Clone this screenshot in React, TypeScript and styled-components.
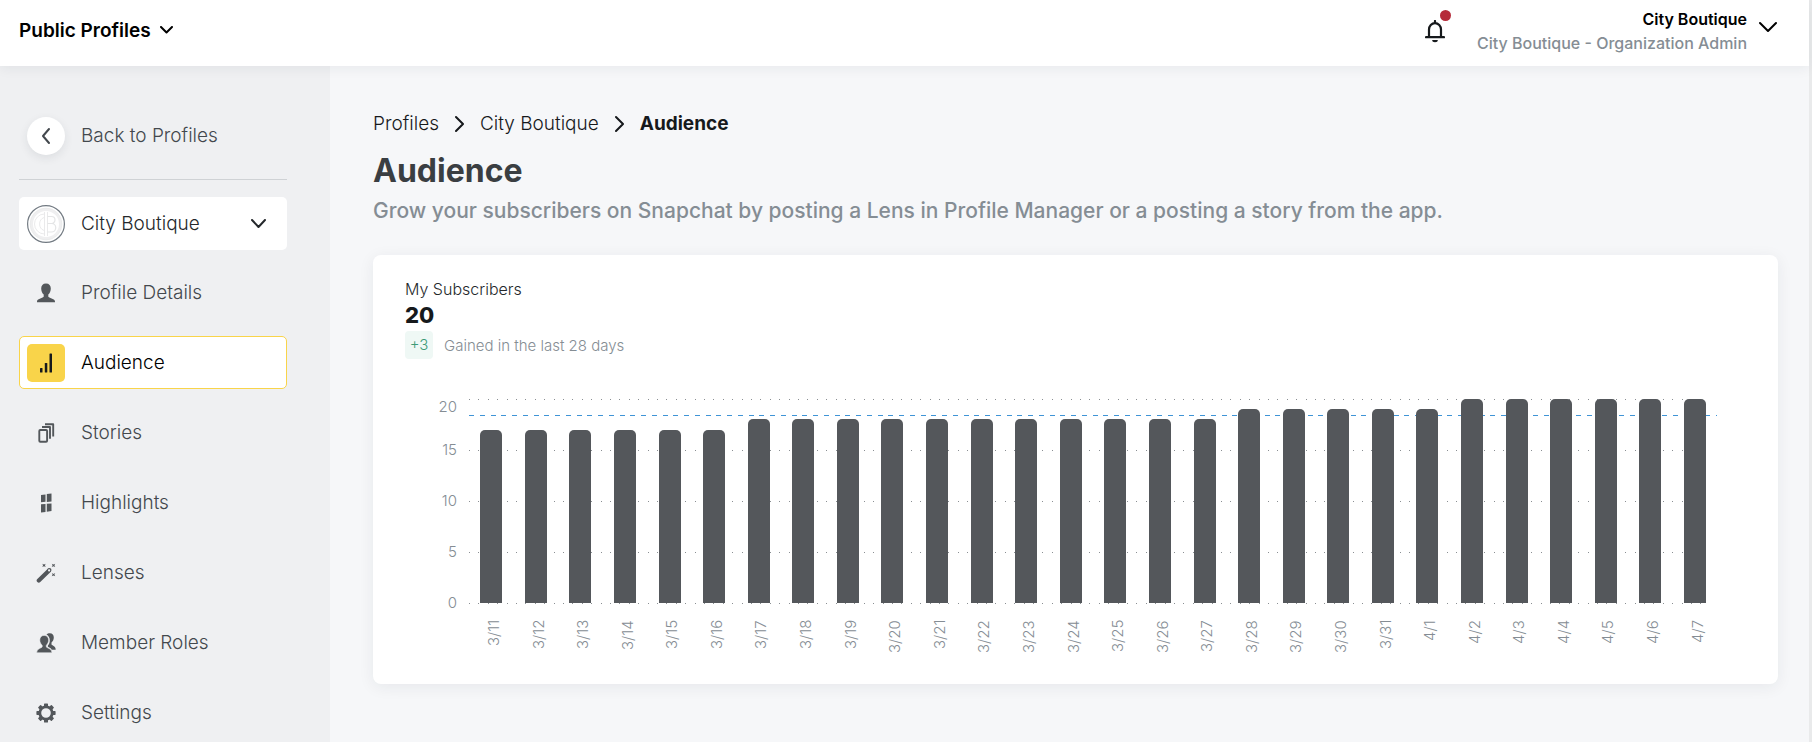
import React from "react";
import styled, { createGlobalStyle } from "styled-components";

const GlobalStyle = createGlobalStyle`
  *, *::before, *::after { box-sizing: border-box; }
  html { height: 100%; }
  body {
    margin: 0;
    min-height: 100%;
    background: #f6f7f9;
    color: #16191c;
    font-family: Inter, "Liberation Sans", sans-serif;
    -webkit-font-smoothing: antialiased;
  }
  button { font: inherit; color: inherit; background: none; border: 0; padding: 0; cursor: pointer; }
  a { color: inherit; text-decoration: none; }
  h1, h2, p, ul, ol { margin: 0; padding: 0; }
  ul, ol { list-style: none; }
  svg { display: block; flex: none; }
`;

const Page = styled.div`
  min-height: 100vh;
  display: flex;
  flex-direction: column;
  border-right: 3px solid #e9eaeb;
`;

const TopBar = styled.header`
  position: relative;
  z-index: 1;
  height: 66px;
  flex: none;
  padding: 0 32px 0 19px;
  display: flex;
  justify-content: space-between;
  background: #fff;
  box-shadow: 0 2px 12px rgba(30, 40, 50, 0.07);
`;

const AppSwitcher = styled.button`
  height: 60px;
  display: flex;
  align-items: center;
  gap: 9px;
  color: #000;
  font-size: 19px;
  font-weight: 600;
`;

const TopActions = styled.div`
  display: flex;
  align-items: flex-start;
  gap: 32px;
`;

const BellButton = styled.button`
  position: relative;
  margin-top: 20px;
`;

const UnreadDot = styled.span`
  position: absolute;
  top: -10px;
  right: -6px;
  width: 11px;
  height: 11px;
  border-radius: 50%;
  background: #b52a39;
`;

const AccountButton = styled.button`
  display: flex;
  align-items: flex-start;
  gap: 12px;
  margin-top: 7px;
  text-align: right;
  color: #000;
  font-size: 16px;
  line-height: 24px;
  svg { margin-top: 14px; }
`;

const AccountText = styled.span`
  display: flex;
  flex-direction: column;
  font-weight: 500;
`;

const AccountName = styled.span`
  font-weight: 600;
`;

const AccountRole = styled.span`
  color: #858d94;
`;

const Body = styled.div`
  flex: 1;
  display: flex;
`;

const Sidebar = styled.nav`
  flex: none;
  width: 330px;
  padding: 43px 43px 0 19px;
  background: #eff0f2;
`;

const navRow = `
  width: 100%;
  height: 53px;
  padding: 0 7px;
  display: flex;
  align-items: center;
  gap: 16px;
  border: 1px solid transparent;
  border-radius: 5px;
  font-size: 19px;
  font-weight: 300;
  text-align: left;
`;

const BackLink = styled.a`
  ${navRow}
  color: #43484d;
`;

const BackCircle = styled.span`
  width: 38px;
  height: 38px;
  display: flex;
  align-items: center;
  justify-content: center;
  border-radius: 50%;
  background: #fff;
  color: #43484d;
  box-shadow: 0 3px 10px rgba(30, 40, 50, 0.09);
`;

const Divider = styled.hr`
  height: 1px;
  margin: 17px 0;
  border: 0;
  background: #cfd2d5;
`;

const ProfilePicker = styled.button`
  && {
    ${navRow}
    padding-right: 20px;
    background: #fff;
    color: #24282b;
  }
`;

const PickerName = styled.span`
  flex: 1;
`;

const NavList = styled.ul`
  margin-top: 16px;
  display: flex;
  flex-direction: column;
  gap: 17px;
`;

const NavLink = styled.a<{ $active?: boolean }>`
  ${navRow}
  color: ${(p) => (p.$active ? "#000" : "#43484d")};
  ${(p) => p.$active && "background: #fff; border-color: #f9d44a;"}
`;

const NavIcon = styled.span<{ $active?: boolean }>`
  width: 38px;
  height: 38px;
  display: flex;
  align-items: center;
  justify-content: center;
  border-radius: 5px;
  color: ${(p) => (p.$active ? "#16191c" : "#53575b")};
  background: ${(p) => (p.$active ? "#f9d44a" : "transparent")};
`;

const Main = styled.main`
  flex: 1;
  min-width: 0;
  padding: 46px 31px 60px 43px;
`;

const Breadcrumbs = styled.ol`
  display: flex;
  align-items: center;
  font-size: 19px;
  line-height: 24px;
`;

const Crumb = styled.li<{ $current?: boolean }>`
  display: flex;
  align-items: center;
  font-weight: ${(p) => (p.$current ? 700 : 300)};
  svg { margin: 0 16px; }
`;

const Title = styled.h1`
  margin-top: 15px;
  color: #3a3e42;
  font-size: 32px;
  font-weight: 700;
  line-height: 40px;
`;

const Subtitle = styled.p`
  margin-top: 4px;
  color: #858d94;
  font-size: 21px;
  font-weight: 500;
  line-height: 32px;
`;

const Card = styled.section`
  margin-top: 28px;
  padding: 22px 61px 32px 32px;
  border-radius: 8px;
  background: #fff;
  box-shadow: 0 3px 16px rgba(30, 40, 50, 0.07);
`;

const MetricLabel = styled.h2`
  font-size: 16px;
  font-weight: 300;
  line-height: 24px;
  color: #24282b;
`;

const MetricValue = styled.p`
  font-size: 22px;
  font-weight: 800;
  line-height: 28px;
`;

const MetricDelta = styled.p`
  margin-top: 2px;
  display: flex;
  align-items: center;
  gap: 11px;
  color: #858d94;
  font-size: 15px;
  font-weight: 300;
`;

const DeltaBadge = styled.span`
  width: 28px;
  height: 28px;
  border-radius: 4px;
  background: #eff8f5;
  color: #3d9b77;
  line-height: 28px;
  text-align: center;
`;

const Chart = styled.div`
  margin-top: 40px;
  display: grid;
  grid-template-columns: 52px 1fr;
  column-gap: 12px;
  color: #858d94;
  font-size: 15px;
  font-weight: 300;
`;

const YAxis = styled.div`
  display: grid;
  grid-template-rows: 16px 43px repeat(3, 51px);
  align-items: end;
  margin-bottom: -8px;
  text-align: right;
  line-height: 16px;
`;

const Plot = styled.div`
  position: relative;
  height: 204px;
`;

const Lines = styled.svg`
  position: absolute;
  inset: 0;
  width: 100%;
  height: 100%;
  overflow: visible;
`;

const Bars = styled.div`
  position: relative;
  height: 100%;
  display: flex;
  align-items: flex-end;
`;

const BarSlot = styled.div`
  flex: 1;
  height: 100%;
  display: flex;
  align-items: flex-end;
  justify-content: center;
`;

const Bar = styled.div`
  width: 22px;
  border-radius: 5px 5px 0 0;
  background: #54575b;
`;

const XAxis = styled.div`
  grid-column: 2;
  height: 32px;
  margin: 17px -3px 0 3px;
  display: flex;
`;

const XLabel = styled.span`
  flex: 1;
  display: flex;
  align-items: center;
  justify-content: flex-end;
  writing-mode: vertical-rl;
  transform: rotate(180deg);
  line-height: 16px;
`;

const Chevron = ({ width, height, points, stroke = 2 }: { width: number; height: number; points: string; stroke?: number }) => (
  <svg width={width} height={height} viewBox={`0 0 ${width} ${height}`} fill="none" stroke="currentColor" strokeWidth={stroke} strokeLinecap="round" strokeLinejoin="round" aria-hidden="true">
    <polyline points={points} />
  </svg>
);

const BellIcon = () => (
  <svg width="20" height="23" viewBox="0 0 20 23" fill="none" stroke="currentColor" strokeWidth="2.2" aria-hidden="true">
    <path d="M4 17V9.5a6 6.3 0 0 1 12 0V17" />
    <path d="M1 17.2h18" strokeLinecap="round" />
    <path d="M10 1v2" strokeLinecap="round" />
    <path d="M7.2 20h5.6a2.8 2.2 0 0 1-5.6 0z" fill="currentColor" stroke="none" />
  </svg>
);

const Icon = ({ children }: { children: React.ReactNode }) => (
  <svg width="20" height="20" viewBox="0 0 20 20" fill="currentColor" aria-hidden="true">
    {children}
  </svg>
);

const PersonIcon = () => (
  <Icon>
    <path d="M10 .5c3.200 0 4.800 2 4.800 5 0 2.600-1 4.800-2.500 6v2.200c1.400 1.700 6.700 1.800 6.700 4.800v.8H1v-.8c0-3 5.300-3.100 6.700-4.800v-2.200C6.200 10.300 5.200 8.100 5.200 5.500c0-3 1.600-5 4.800-5z" />
  </Icon>
);

const ChartIcon = () => (
  <Icon>
    <rect x="4" y="15" width="2.500" height="4.500" rx=".6" />
    <rect x="8.800" y="10" width="2.500" height="9.500" rx=".6" />
    <rect x="13.500" y=".5" width="2.500" height="19" rx=".6" />
  </Icon>
);

const StoriesIcon = () => (
  <Icon>
    <g fill="none" stroke="currentColor" strokeWidth="1.900" strokeLinejoin="round">
      <rect x="3.300" y="7" width="7.800" height="11.800" rx="1" />
      <path d="M6 4h8V15.800" />
      <path d="M9 1.300h8.200v12.200" />
    </g>
  </Icon>
);

const HighlightsIcon = () => (
  <Icon>
    <path d="M5 2l4.500-.6v7.400L5 9.300zM10.800 1L15.500.4v8.200l-4.700.5zM5 11.300l4.500-.3v8L5 19.600zM10.800 10.800l4.700-.4v7.700l-4.700.6z" />
  </Icon>
);

const WandIcon = () => (
  <Icon>
    <path d="M2.800 17.500L12.800 7.700" fill="none" stroke="currentColor" strokeWidth="4.200" strokeLinecap="round" />
    <circle cx="13.400" cy="7.100" r="2.100" />
    <circle cx="13.100" cy="7.400" r="1.100" fill="#eff0f2" />
    <path d="M6.300.7l1.700.9 1.700-.9-.8 1.600.8 1.700-1.700-.8-1.700.8.8-1.700zM15.800.7l1.700.9 1.700-.9-.8 1.600.8 1.700-1.700-.8-1.700.8.8-1.700zM15.800 10l1.700.9 1.700-.9-.8 1.600.8 1.700-1.700-.8-1.700.8.8-1.700z" />
  </Icon>
);

const MembersIcon = () => (
  <Icon>
    <path d="M10.500 1.600C11.300.7 12.500.3 13.800.3c2.700 0 4 1.800 4 4.300 0 2.200-1 4-2.300 5v1.900c1 1.100 4.200 1.700 4.200 5.200h-3.900c-1-1.700-3.100-2.200-3.900-2.900v-1.300c1.200-1.200 1.900-3 1.900-5 0-2.600-1.200-4.800-3.300-5.900z" />
    <path d="M8.200 2.400c2.800 0 4.400 1.900 4.400 4.600 0 2.200-1 4.100-2.300 5.200v1.800c1.100 1.200 5.500 1.800 5.500 5.200v.5H.8v-.5c0-3.400 4.300-4 5.400-5.200v-1.800C4.800 11.100 3.800 9.200 3.800 7c0-2.700 1.600-4.600 4.400-4.600z" stroke="#eff0f2" strokeWidth=".5" />
  </Icon>
);

const GearIcon = () => (
  <Icon>
    <circle cx="10" cy="10" r="6.200" fill="none" stroke="currentColor" strokeWidth="2.800" />
    {[0, 45, 90, 135, 180, 225, 270, 315].map((angle) => (
      <rect key={angle} x="8" y=".4" width="4" height="3.600" rx=".7" transform={`rotate(${angle} 10 10)`} />
    ))}
  </Icon>
);

const BoutiqueLogo = () => (
  <svg width="38" height="38" viewBox="0 0 38 38" fill="none" aria-hidden="true">
    <circle cx="19" cy="19" r="18.400" fill="#fff" stroke="#737b83" strokeWidth="1.200" />
    <circle cx="19" cy="19" r="14.500" stroke="#efeff0" strokeWidth="3" />
    <circle cx="19" cy="19" r="16" stroke="#e6e7e8" strokeWidth=".6" />
    <path d="M17.500 9a10 10 0 0 0 0 20" stroke="#e4e5e6" strokeWidth=".8" />
    <path d="M17 12.500a7 7 0 0 0 0 13" stroke="#e4e5e6" strokeWidth=".8" />
    <path d="M17.500 7v24M20.500 7v24" stroke="#e4e5e6" strokeWidth=".8" />
    <path d="M20.500 11.500h4a3.500 3.500 0 0 1 0 7h-4M24.500 18.500a4 4 0 0 1 0 8.500h-4" stroke="#e4e5e6" strokeWidth="1.200" />
  </svg>
);

const navItems = [
  { label: "Profile Details", icon: <PersonIcon /> },
  { label: "Audience", icon: <ChartIcon />, active: true },
  { label: "Stories", icon: <StoriesIcon /> },
  { label: "Highlights", icon: <HighlightsIcon /> },
  { label: "Lenses", icon: <WandIcon /> },
  { label: "Member Roles", icon: <MembersIcon /> },
  { label: "Settings", icon: <GearIcon /> },
];

const MAX = 20;
const ticks = [20, 15, 10, 5, 0];
const subscribers: [string, number][] = [
  ["3/11", 17], ["3/12", 17], ["3/13", 17], ["3/14", 17], ["3/15", 17], ["3/16", 17],
  ["3/17", 18], ["3/18", 18], ["3/19", 18], ["3/20", 18], ["3/21", 18], ["3/22", 18],
  ["3/23", 18], ["3/24", 18], ["3/25", 18], ["3/26", 18], ["3/27", 18],
  ["3/28", 19], ["3/29", 19], ["3/30", 19], ["3/31", 19], ["4/1", 19],
  ["4/2", 20], ["4/3", 20], ["4/4", 20], ["4/5", 20], ["4/6", 20], ["4/7", 20],
];
const average = subscribers.reduce((sum, [, n]) => sum + n, 0) / subscribers.length;
const fromTop = (n: number) => `${100 - (n / MAX) * 100}%`;

export default function App() {
  return (
    <Page>
      <GlobalStyle />
      <TopBar>
        <AppSwitcher type="button">
          Public Profiles
          <Chevron width={13} height={8} points="1,1 6.5,6.5 12,1" />
        </AppSwitcher>
        <TopActions>
          <BellButton type="button" aria-label="Notifications">
            <BellIcon />
            <UnreadDot />
          </BellButton>
          <AccountButton type="button">
            <AccountText>
              <AccountName>City Boutique</AccountName>
              <AccountRole>City Boutique - Organization Admin</AccountRole>
            </AccountText>
            <Chevron width={18} height={12} points="1,2 9,10 17,2" />
          </AccountButton>
        </TopActions>
      </TopBar>
      <Body>
        <Sidebar aria-label="Profile">
          <BackLink href="#profiles">
            <BackCircle>
              <Chevron width={10} height={18} points="8,2 2,9 8,16" />
            </BackCircle>
            Back to Profiles
          </BackLink>
          <Divider />
          <ProfilePicker type="button">
            <BoutiqueLogo />
            <PickerName>City Boutique</PickerName>
            <Chevron width={15} height={9} points="1,1 7.5,8 14,1" />
          </ProfilePicker>
          <NavList>
            {navItems.map(({ label, icon, active }) => (
              <li key={label}>
                <NavLink href={`#${label.toLowerCase().replace(" ", "-")}`} $active={active} aria-current={active ? "page" : undefined}>
                  <NavIcon $active={active}>{icon}</NavIcon>
                  {label}
                </NavLink>
              </li>
            ))}
          </NavList>
        </Sidebar>
        <Main>
          <nav aria-label="Breadcrumb">
            <Breadcrumbs>
              <Crumb>
                <a href="#profiles">Profiles</a>
                <Chevron width={9} height={18} points="1,2 8,9 1,16" />
              </Crumb>
              <Crumb>
                <a href="#city-boutique">City Boutique</a>
                <Chevron width={9} height={18} points="1,2 8,9 1,16" />
              </Crumb>
              <Crumb $current aria-current="page">Audience</Crumb>
            </Breadcrumbs>
          </nav>
          <Title>Audience</Title>
          <Subtitle>Grow your subscribers on Snapchat by posting a Lens in Profile Manager or a posting a story from the app.</Subtitle>
          <Card>
            <MetricLabel>My Subscribers</MetricLabel>
            <MetricValue>20</MetricValue>
            <MetricDelta>
              <DeltaBadge>+3</DeltaBadge>
              Gained in the last 28 days
            </MetricDelta>
            <Chart>
              <YAxis>
                {ticks.map((tick) => (
                  <span key={tick}>{tick}</span>
                ))}
              </YAxis>
              <Plot>
                <Lines aria-hidden="true" shapeRendering="crispEdges">
                  {ticks.map((tick) => (
                    <line key={tick} x1="0" x2="99.4%" y1={fromTop(tick)} y2={fromTop(tick)} stroke="#8a8f93" strokeWidth="1" strokeDasharray="1 8.4" />
                  ))}
                  <line x1="0" x2="100%" y1={fromTop(average)} y2={fromTop(average)} stroke="#3f94d6" strokeWidth="1" strokeDasharray="5 5.750" />
                </Lines>
                <Bars>
                  {subscribers.map(([day, count]) => (
                    <BarSlot key={day}>
                      <Bar style={{ height: `${(count / MAX) * 100}%` }} />
                    </BarSlot>
                  ))}
                </Bars>
              </Plot>
              <XAxis>
                {subscribers.map(([day]) => (
                  <XLabel key={day}>{day}</XLabel>
                ))}
              </XAxis>
            </Chart>
          </Card>
        </Main>
      </Body>
    </Page>
  );
}
